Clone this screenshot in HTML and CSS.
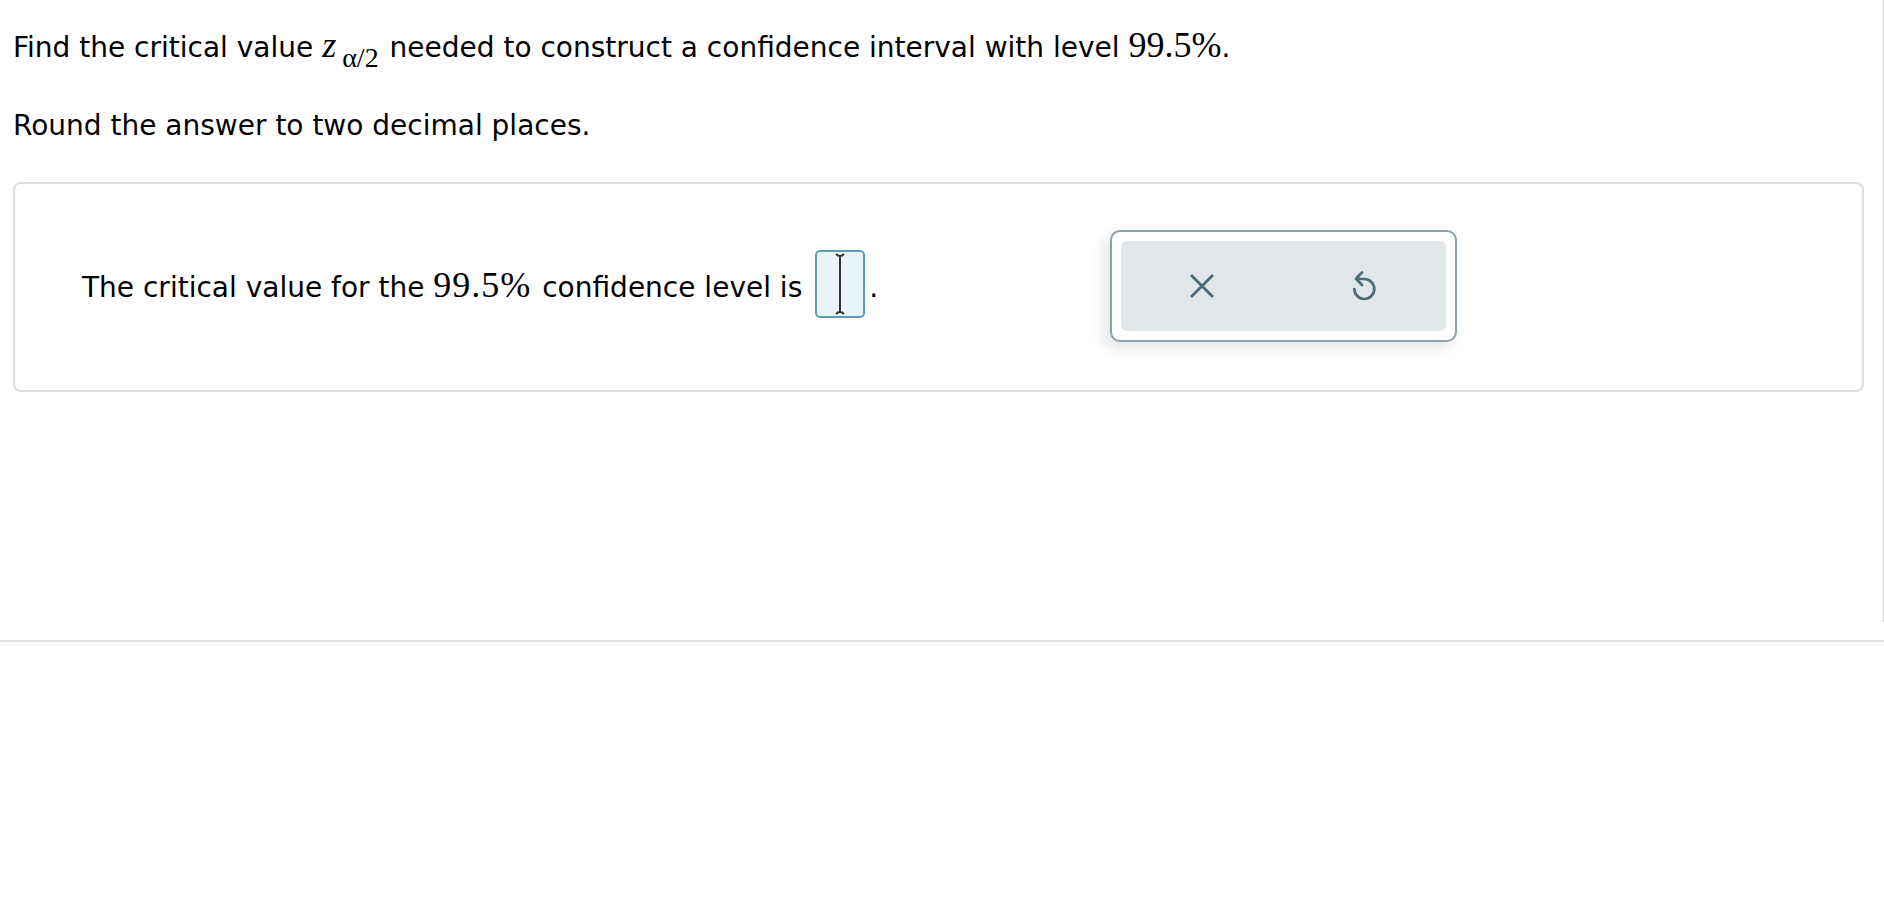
FILE: index.html
```html
<!DOCTYPE html>
<html lang="en">
<head>
    <meta charset="UTF-8">
    <meta name="viewport" content="width=device-width, initial-scale=1.0">
    <title>Critical Value Question</title>
    <link rel="stylesheet" href="styles.css">
</head>
<body>
    <main class="question">
        <p class="prompt">
            Find the critical value <span class="math"><i>z</i><sub class="math-sub">α/2</sub></span> needed to construct a confidence interval with level <span class="math">99.5%</span>.
        </p>
        <p class="prompt second">Round the answer to two decimal places.</p>

        <section class="answer-box">
            <div class="sentence">
                The critical value for the <span class="math pct">99.5%</span> confidence level is <span class="answer-input"><svg class="ibeam" width="12" height="62" viewBox="0 0 12 62"><path d="M2 1 Q6 5 10 1 M6 3 V59 M2 61 Q6 57 10 61" fill="none" stroke="#333" stroke-width="2"/></svg></span>.
            </div>

            <div class="tool-panel">
                <div class="tools">
                    <button class="tool-btn" title="Clear">
                        <svg width="24" height="24" viewBox="0 0 24 24"><path d="M1 1 L23 23 M23 1 L1 23" stroke="#4b6b78" stroke-width="2.8" fill="none"/></svg>
                    </button>
                    <button class="tool-btn" title="Undo">
                        <svg width="23" height="30" viewBox="12 11 23 30"><path d="M21 12.5 L15 18.8 L21 25 M15 19 H23.3 A10 10 0 1 1 13.3 29" stroke="#4b6b78" stroke-width="2.7" fill="none" stroke-linecap="round" stroke-linejoin="round"/></svg>
                    </button>
                </div>
            </div>
        </section>
    </main>
    <div class="divider"></div>
</body>
</html>
```

FILE: styles.css
```css
body {
    margin: 0;
    padding: 0;
    background-color: #fff;
    color: #000;
    font-family: "DejaVu Sans", Verdana, sans-serif;
    font-size: 28px;
}

.question {
    height: 622px;
    padding: 0 19px 0 13px;
    border-right: 1px solid #d0d5d9;
    box-sizing: border-box;
    overflow: hidden;
}

.prompt {
    margin: 28px 0 0;
    line-height: 40px;
}

.prompt.second {
    margin-top: 38px;
}

.math {
    font-family: "Liberation Serif", "Times New Roman", serif;
    font-size: 36px;
    line-height: 0;
}

.math i {
    font-style: italic;
    margin-right: 6px;
}

.math-sub {
    font-size: 28px;
    margin-right: 2px;
    vertical-align: -10px;
}

.pct {
    margin-right: 2px;
    letter-spacing: 1px;
}

.answer-box {
    margin-top: 36px;
    border: 2px solid #d9dee2;
    border-radius: 8px;
    padding: 46px 0 48px 67px;
    display: flex;
    align-items: center;
}

.sentence {
    flex: 0 0 1028px;
    margin-bottom: 4px;
}

.answer-input {
    display: inline-block;
    width: 50px;
    height: 68px;
    box-sizing: border-box;
    margin: 0 4px 0 4px;
    padding-top: 1px;
    border: 2px solid #5c9db2;
    border-radius: 5px;
    background-color: #e9f4f8;
    vertical-align: -21px;
}

.ibeam {
    display: block;
    margin: 0 auto;
}

.tool-panel {
    width: 347px;
    height: 112px;
    box-sizing: border-box;
    padding: 9px;
    border: 2px solid #8da1a9;
    border-radius: 10px;
    background-color: #fff;
    box-shadow: -6px 6px 14px rgba(40, 60, 70, 0.13);
}

.tools {
    display: flex;
    height: 100%;
    background-color: #e1e6e9;
    border-radius: 6px;
}

.tool-btn {
    flex: 1;
    display: flex;
    align-items: center;
    justify-content: center;
    background: none;
    border: none;
    padding: 0;
    cursor: pointer;
}

.divider {
    margin-top: 18px;
    border-top: 2px solid #e0e4e7;
}
```
